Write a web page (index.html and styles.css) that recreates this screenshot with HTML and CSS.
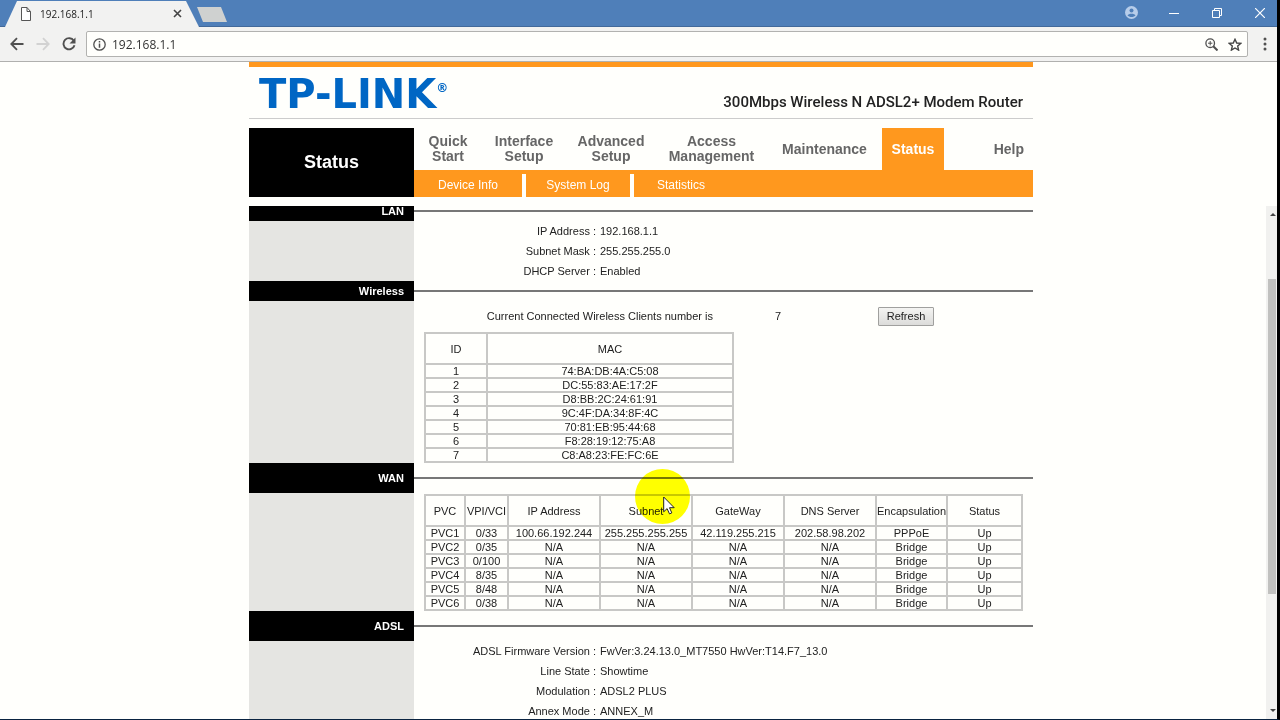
FILE: index.html
```html
<!DOCTYPE html>
<html lang="en">
<head>
    <meta charset="UTF-8">
    <meta name="viewport" content="width=device-width, initial-scale=1.0">
    <title>192.168.1.1</title>
    <link rel="stylesheet" href="styles.css">
</head>
<body>
    <!-- Browser window -->
    <div class="titlebar">
        <div class="tab">
            <svg width="10" height="14" viewBox="0 0 10 14" fill="#fff" stroke="#555"><path d="M.5.5h5.500l3.500 4v9h-9z"/><path d="M6 .5v4h3.500" fill="none"/></svg>
            <span class="tab-title">192.168.1.1</span>
            <button class="tab-close" aria-label="Close tab">
                <svg width="9" height="9" viewBox="0 0 9 9" stroke="#444" stroke-width="1.600"><path d="M1 1l7 7M8 1l-7 7"/></svg>
            </button>
        </div>
        <button class="new-tab" aria-label="New tab"></button>
        <div class="window-controls">
            <button aria-label="User">
                <svg width="13" height="13" viewBox="0 0 13 13"><circle cx="6.500" cy="6.500" r="6.500" fill="#b7cdea"/><circle cx="6.500" cy="4.500" r="2" fill="#4f7fb9"/><path d="M2.500 9.300c1-2.200 7-2.200 8 0-1.500 2.400-6.500 2.400-8 0z" fill="#4f7fb9"/></svg>
            </button>
            <button aria-label="Minimize">
                <svg width="10" height="10" viewBox="0 0 10 10" stroke="#fff"><path d="M0 5.500h10"/></svg>
            </button>
            <button aria-label="Restore">
                <svg width="10" height="10" viewBox="0 0 10 10" fill="none" stroke="#fff"><path d="M.5 2.500h7v7h-7zM2.500 2.500v-2h7v7h-2"/></svg>
            </button>
            <button aria-label="Close">
                <svg width="10" height="10" viewBox="0 0 10 10" stroke="#fff" stroke-width="1.200"><path d="M0 0l10 10M10 0L0 10"/></svg>
            </button>
        </div>
    </div>

    <div class="toolbar">
        <button aria-label="Back">
            <svg width="14" height="14" viewBox="0 0 14 14" fill="none" stroke="#505050" stroke-width="1.800"><path d="M13.500 7H1.500M7 1.200L1.300 7 7 12.800"/></svg>
        </button>
        <button aria-label="Forward">
            <svg width="14" height="14" viewBox="0 0 14 14" fill="none" stroke="#d2d2d2" stroke-width="1.800"><path d="M.5 7h12M7 1.200L12.700 7 7 12.800"/></svg>
        </button>
        <button aria-label="Reload">
            <svg width="14" height="14" viewBox="0 0 14 14" fill="none" stroke="#505050" stroke-width="1.900"><path d="M11.800 3.700A5.600 5.600 0 1 0 12.500 8.300"/><path d="M13.500.5v6h-6z" fill="#505050" stroke="none"/></svg>
        </button>
        <div class="omnibox">
            <svg width="13" height="13" viewBox="0 0 13 13" fill="none" stroke="#505050" stroke-width="1.300"><circle cx="6.500" cy="6.500" r="5.700"/><path d="M6.500 5.500v4.300M6.500 3v1.500" stroke-width="1.500"/></svg>
            <input type="text" value="192.168.1.1" aria-label="Address">
            <button aria-label="Zoom">
                <svg width="13" height="13" viewBox="0 0 13 13" fill="none" stroke="#505050" stroke-width="1.300"><circle cx="5.200" cy="5.200" r="4.300"/><path d="M3 5.200h4.400M5.200 3v4.400" stroke-width="1"/><path d="M8.300 8.300l4.200 4.200" stroke-width="2"/></svg>
            </button>
            <button aria-label="Bookmark">
                <svg width="14" height="13" viewBox="0 0 14 13" fill="none" stroke="#444" stroke-width="1.400"><path d="M7 1.300l1.700 3.700 4 .4-3 2.700.9 4L7 10l-3.600 2.100.9-4-3-2.700 4-.4z"/></svg>
            </button>
        </div>
        <button class="menu" aria-label="Menu">
            <svg width="4" height="14" viewBox="0 0 4 14" fill="#505050"><circle cx="2" cy="2" r="1.500"/><circle cx="2" cy="7" r="1.500"/><circle cx="2" cy="12" r="1.500"/></svg>
        </button>
    </div>

    <!-- Router header -->
    <header class="page">
        <div class="banner">
            <div class="logo">TP-LINK<sup>®</sup></div>
            <div class="model">300Mbps Wireless N ADSL2+ Modem Router</div>
        </div>
        <div class="nav">
            <h1>Status</h1>
            <div class="menus">
                <nav class="main-menu">
                    <a href="#">Quick<br>Start</a>
                    <a href="#">Interface<br>Setup</a>
                    <a href="#">Advanced<br>Setup</a>
                    <a href="#">Access<br>Management</a>
                    <a href="#">Maintenance</a>
                    <a href="#" class="active">Status</a>
                    <a href="#" class="help">Help</a>
                </nav>
                <nav class="sub-menu">
                    <a href="#">Device Info</a>
                    <a href="#">System Log</a>
                    <a href="#">Statistics</a>
                </nav>
            </div>
        </div>
    </header>

    <!-- Status frame -->
    <div class="frame">
        <main class="page">
            <section class="lan">
                <h2>LAN</h2>
                <dl>
                    <dt>IP Address :</dt><dd>192.168.1.1</dd>
                    <dt>Subnet Mask :</dt><dd>255.255.255.0</dd>
                    <dt>DHCP Server :</dt><dd>Enabled</dd>
                </dl>
            </section>

            <section>
                <h2>Wireless</h2>
                <div class="content">
                    <div class="clients">
                        <span>Current Connected Wireless Clients number is</span>
                        <span>7</span>
                        <button>Refresh</button>
                    </div>
                    <table class="mac-table">
                        <colgroup><col class="c-id"><col></colgroup>
                        <thead>
                            <tr><th>ID</th><th>MAC</th></tr>
                        </thead>
                        <tbody>
                            <tr><td>1</td><td>74:BA:DB:4A:C5:08</td></tr>
                            <tr><td>2</td><td>DC:55:83:AE:17:2F</td></tr>
                            <tr><td>3</td><td>D8:BB:2C:24:61:91</td></tr>
                            <tr><td>4</td><td>9C:4F:DA:34:8F:4C</td></tr>
                            <tr><td>5</td><td>70:81:EB:95:44:68</td></tr>
                            <tr><td>6</td><td>F8:28:19:12:75:A8</td></tr>
                            <tr><td>7</td><td>C8:A8:23:FE:FC:6E</td></tr>
                        </tbody>
                    </table>
                </div>
            </section>

            <section class="tall">
                <h2>WAN</h2>
                <div class="content">
                    <table class="wan-table">
                        <colgroup>
                            <col class="c-pvc"><col class="c-vpi"><col><col><col><col><col class="c-enc"><col class="c-status">
                        </colgroup>
                        <thead>
                            <tr><th>PVC</th><th>VPI/VCI</th><th>IP Address</th><th>Subnet</th><th>GateWay</th><th>DNS Server</th><th>Encapsulation</th><th>Status</th></tr>
                        </thead>
                        <tbody>
                            <tr><td>PVC1</td><td>0/33</td><td>100.66.192.244</td><td>255.255.255.255</td><td>42.119.255.215</td><td>202.58.98.202</td><td>PPPoE</td><td>Up</td></tr>
                            <tr><td>PVC2</td><td>0/35</td><td>N/A</td><td>N/A</td><td>N/A</td><td>N/A</td><td>Bridge</td><td>Up</td></tr>
                            <tr><td>PVC3</td><td>0/100</td><td>N/A</td><td>N/A</td><td>N/A</td><td>N/A</td><td>Bridge</td><td>Up</td></tr>
                            <tr><td>PVC4</td><td>8/35</td><td>N/A</td><td>N/A</td><td>N/A</td><td>N/A</td><td>Bridge</td><td>Up</td></tr>
                            <tr><td>PVC5</td><td>8/48</td><td>N/A</td><td>N/A</td><td>N/A</td><td>N/A</td><td>Bridge</td><td>Up</td></tr>
                            <tr><td>PVC6</td><td>0/38</td><td>N/A</td><td>N/A</td><td>N/A</td><td>N/A</td><td>Bridge</td><td>Up</td></tr>
                        </tbody>
                    </table>
                    <!-- Mouse pointer with its highlight -->
                    <div class="spot"></div>
                    <svg class="pointer" width="12" height="19" viewBox="0 0 12 19" fill="#fff" stroke="#222"><path d="M.7 1v14.800l3.400-3.200 2.400 5.300 2.300-1-2.300-5.200h4.700z"/></svg>
                </div>
            </section>

            <section class="tall">
                <h2>ADSL</h2>
                <dl>
                    <dt>ADSL Firmware Version :</dt><dd>FwVer:3.24.13.0_MT7550 HwVer:T14.F7_13.0</dd>
                    <dt>Line State :</dt><dd>Showtime</dd>
                    <dt>Modulation :</dt><dd>ADSL2 PLUS</dd>
                    <dt>Annex Mode :</dt><dd>ANNEX_M</dd>
                </dl>
            </section>
        </main>
        <div class="scrollbar">
            <div class="arrow up"></div>
            <div class="thumb"></div>
            <div class="arrow down"></div>
        </div>
    </div>
</body>
</html>
```
FILE: styles.css
```css
* {
    margin: 0;
    padding: 0;
    box-sizing: border-box;
}

body {
    display: flex;
    flex-direction: column;
    height: 100vh;
    overflow: hidden;
    background-color: #fffffc;
    border-right: 3px solid #000;
    border-bottom: 1px solid #0a2340;
    color: #222;
    font-family: "Liberation Sans", Arial, sans-serif;
    font-size: 11px;
}

a {
    text-decoration: none;
}

button {
    border: none;
    background: none;
}

svg {
    display: block;
}

/* Browser window */
.titlebar {
    flex: none;
    display: flex;
    height: 27px;
    padding-left: 5px;
    background-color: #4f7fb9;
    border-bottom: 1px solid #42699a;
}

.tab {
    display: flex;
    align-items: center;
    width: 194px;
    height: 27px;
    padding: 0 17px 0 16px;
    background-color: #f2f2f1;
    clip-path: polygon(0 100%, 12px 1px, 181px 1px, 100% 100%);
}

.tab-title {
    flex: 1;
    margin-left: 9px;
    font-family: "Open Sans", sans-serif;
    font-size: 10px;
}

.new-tab {
    width: 30px;
    height: 15px;
    margin: 7px 0 0 -2px;
    background-color: #cfd1d0;
    clip-path: polygon(0 0, 24px 0, 100% 100%, 6px 100%);
}

.window-controls {
    display: flex;
    gap: 9px;
    height: 25px;
    margin-left: auto;
}

.window-controls button {
    display: grid;
    place-items: center;
    width: 34px;
}

.toolbar {
    flex: none;
    display: flex;
    align-items: center;
    gap: 12px;
    height: 35px;
    padding: 0 10px;
    background-color: #f2f2f1;
    border-bottom: 1px solid #b0b0ae;
}

.omnibox {
    flex: 1;
    display: flex;
    align-items: center;
    gap: 10px;
    height: 26px;
    margin-right: 3px;
    margin-left: -2px;
    padding: 0 5px 0 6px;
    background-color: #fffffc;
    border: 1px solid #b2b2b0;
    border-radius: 2px;
}

.omnibox input {
    flex: 1;
    margin-left: -4px;
    border: none;
    outline: none;
    background: none;
    color: #333;
    font-family: "Open Sans", sans-serif;
    font-size: 12px;
}

/* Router header */
.page {
    width: 789px;
    margin: 0 auto;
    padding-left: 5px;
}

header.page {
    flex: none;
}

.banner {
    display: flex;
    justify-content: space-between;
    height: 57px;
    padding: 0 10px;
    border-top: 5px solid #ff981e;
    border-bottom: 1px solid #ccc;
}

.logo {
    color: #0066c4;
    font-family: "DejaVu Sans", sans-serif;
    font-size: 40px;
    font-weight: bold;
    line-height: 54px;
}

.logo sup {
    font-size: 12px;
    line-height: 14px;
    vertical-align: 16px;
}

.model {
    padding-top: 25px;
    font-family: Roboto, sans-serif;
    font-size: 15px;
    font-weight: 500;
    line-height: 20px;
}

.nav {
    display: flex;
    margin: 9px 0;
}

.nav h1 {
    width: 165px;
    background-color: #000;
    color: #fff;
    font-size: 18px;
    line-height: 68px;
    text-align: center;
}

.menus {
    flex: 1;
}

.main-menu {
    display: grid;
    grid-template-columns: 68px 84px 90px 111px 115px 62px 1fr;
    height: 42px;
}

.main-menu a {
    display: grid;
    place-items: center;
    align-content: center;
    color: #666;
    font-size: 14px;
    font-weight: bold;
    line-height: 15px;
    text-align: center;
}

.main-menu .active {
    background-color: #ff981e;
    color: #fff;
}

.main-menu .help {
    justify-items: end;
    padding-right: 9px;
}

.sub-menu {
    display: flex;
    height: 27px;
    padding-top: 4px;
    background-color: #ff981e;
}

.sub-menu a {
    width: 108px;
    border-right: 4px solid #fffffc;
    color: #fff;
    font-size: 12px;
    line-height: 22px;
    text-align: center;
}

.sub-menu a:first-child {
    width: 112px;
}

.sub-menu a:last-child {
    width: 94px;
    border-right: none;
}

/* Status frame */
.frame {
    position: relative;
    flex: 1;
    overflow: hidden;
}

section {
    display: grid;
    grid-template-columns: 165px 1fr;
    background: linear-gradient(#e5e5e2, #e5e5e2) no-repeat 0 0 / 165px 100%;
}

section h2 {
    grid-column: 1 / -1;
    display: flex;
    align-items: center;
    justify-content: flex-end;
    padding-right: 629px;
    height: 20px;
    background:
        linear-gradient(#000, #000) no-repeat 0 0 / 165px 100%,
        linear-gradient(#777, #777) no-repeat 165px 50% / 619px 2px;
    color: #fff;
    font-size: 11px;
}

section.tall h2 {
    height: 30px;
}

/* first heading is partly scrolled out of the frame */
section.lan {
    margin-top: -5px;
}

dl {
    grid-column: 2;
    display: grid;
    grid-template-columns: 182px 1fr;
    column-gap: 4px;
    line-height: 20px;
}

dt {
    text-align: right;
}

.content {
    grid-column: 2;
    position: relative;
    padding: 1px 10px 0;
}

.clients {
    display: grid;
    grid-template-columns: 289px 130px 1fr;
    align-items: center;
    height: 28px;
    margin-bottom: 2px;
}

.clients span:first-child {
    text-align: right;
}

.clients span {
    text-align: center;
}

.clients button {
    justify-self: start;
    width: 56px;
    height: 19px;
    margin-left: 35px;
    background: linear-gradient(#f4f4f2, #dcdcda);
    border: 1px solid #a0a09e;
    border-radius: 1px;
    color: #222;
    font-family: inherit;
    font-size: 11px;
}

table {
    table-layout: fixed;
    border-collapse: collapse;
    line-height: 12px;
    text-align: center;
    white-space: nowrap;
}

th,
td {
    height: 14px;
    border: 2px solid #c8c8c6;
}

th {
    height: 31px;
    font-weight: normal;
}

.mac-table {
    width: 310px;
}

.c-id {
    width: 62px;
}

.wan-table {
    width: 599px;
}

.c-pvc {
    width: 40px;
}

.c-vpi {
    width: 43px;
}

.c-enc {
    width: 71px;
}

.c-status {
    width: 75px;
}

.spot {
    position: absolute;
    top: -24px;
    left: 221px;
    width: 55px;
    height: 55px;
    border-radius: 50%;
    background-color: #ff0;
    mix-blend-mode: multiply;
}

.pointer {
    position: absolute;
    top: 3px;
    left: 249px;
}

.scrollbar {
    position: absolute;
    top: 0;
    right: 0;
    bottom: 0;
    display: flex;
    flex-direction: column;
    justify-content: space-between;
    align-items: flex-end;
    width: 11px;
    padding: 7px 1px;
    background-color: #f1f1ef;
}

.thumb {
    flex: none;
    width: 8px;
    height: 63%;
    margin-bottom: 52px;
    background-color: #c1c1bf;
}

.arrow {
    border: 3px solid transparent;
}

.up {
    border-top: none;
    border-bottom-color: #444;
}

.down {
    border-bottom: none;
    border-top-color: #444;
}
```
